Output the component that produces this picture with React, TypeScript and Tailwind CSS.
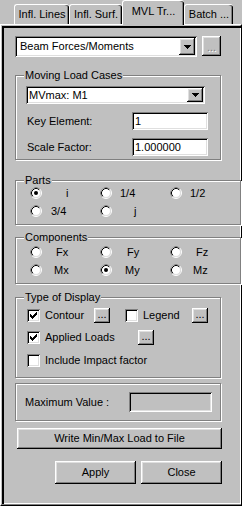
const raised =
  "bg-[#c0c0c0] shadow-[inset_-1px_-1px_0_#000,inset_1px_1px_0_#fff,inset_-2px_-2px_0_#808080,inset_2px_2px_0_#dfdfdf]";
const sunken =
  "shadow-[inset_1px_1px_0_#808080,inset_-1px_-1px_0_#fff,inset_2px_2px_0_#000,inset_-2px_-2px_0_#dfdfdf]";
const etched = "border border-[#808080] shadow-[inset_1px_1px_0_#fff,1px_1px_0_#fff]";

const tabs = [
  { label: "Infl. Lines", w: "w-[55px]" },
  { label: "Infl. Surf.", w: "w-[53px]" },
  { label: "MVL Tr...", w: "w-[62px]", active: true },
  { label: "Batch ...", w: "w-[49px]" },
];

const parts = [
  { label: "i", pad: "pl-[24px]", on: true },
  { label: "1/4", pad: "pl-[8px]" },
  { label: "1/2", pad: "pl-[8px]" },
  { label: "3/4", pad: "pl-[9px]" },
  { label: "j", pad: "pl-[22px]" },
];

const components = [
  { label: "Fx", pad: "pl-[14px]" },
  { label: "Fy", pad: "pl-[15px]" },
  { label: "Fz", pad: "pl-[14px]" },
  { label: "Mx", pad: "pl-[12px]" },
  { label: "My", pad: "pl-[13px]", on: true },
  { label: "Mz", pad: "pl-[11px]" },
];

const Radio = ({ on }: { on?: boolean }) => (
  <svg width="12" height="12" viewBox="0 0 12 12" className="shrink-0">
    <circle cx="6" cy="6" r="5.5" fill="none" stroke="#fff" />
    <path d="M2.11 9.89A5.5 5.5 0 0 1 9.89 2.11" fill="none" stroke="#808080" />
    <circle cx="6" cy="6" r="4.5" fill="#fff" stroke="#dfdfdf" />
    <path d="M2.82 9.18A4.5 4.5 0 0 1 9.18 2.82" fill="none" stroke="#000" />
    {on && <circle cx="6" cy="6" r="2" fill="#000" />}
  </svg>
);

const Check = ({ on }: { on?: boolean }) => (
  <div className={`w-[13px] h-[13px] shrink-0 bg-white flex items-center justify-center ${sunken}`}>
    {on && (
      <svg width="7" height="7" viewBox="0 0 7 7" shapeRendering="crispEdges">
        <path
          d="M0 2h1v3H0z M1 3h1v3H1z M2 4h1v3H2z M3 3h1v3H3z M4 2h1v3H4z M5 1h1v3H5z M6 0h1v3H6z"
          fill="#000"
        />
      </svg>
    )}
  </div>
);

const Arrow = () => (
  <div className={`w-[16px] h-full shrink-0 flex items-center justify-center ${raised}`}>
    <svg width="7" height="4" viewBox="0 0 7 4" shapeRendering="crispEdges">
      <path d="M0 0h7v1H0z M1 1h5v1H1z M2 2h3v1H2z M3 3h1v1H3z" fill="#000" />
    </svg>
  </div>
);

const Dots = ({ className = "", disabled }: { className?: string; disabled?: boolean }) => (
  <div className={`shrink-0 flex items-end justify-center pb-[2px] ${raised} ${className}`}>
    <span className={disabled ? "text-[#808080] [text-shadow:1px_1px_0_#fff]" : ""}>...</span>
  </div>
);

const Group = ({ title, className = "", children }: { title: string; className?: string; children: React.ReactNode }) => (
  <fieldset className={`w-[206px] ${etched} ${className}`}>
    <legend className="ml-[8px] px-px bg-[#c0c0c0] leading-[13px]">{title}</legend>
    {children}
  </fieldset>
);

export default function App() {
  return (
    <div className="w-[242px] h-[506px] bg-[#c0c0c0] flex flex-col text-[11px] leading-[13px] text-black select-none font-['Liberation_Sans',Arial,sans-serif]">
      {/* tabs */}
      <div className="relative z-10 flex items-end h-[24px] pl-[14px]">
        {tabs.map((t) =>
          t.active ? (
            <div
              key={t.label}
              className={`${t.w} h-[25px] -mb-px pt-[4px] text-center bg-[#c0c0c0] border-l border-t border-white rounded-t-[3px] shadow-[inset_-1px_0_0_#000,inset_-2px_0_0_#808080]`}
            >
              {t.label}
            </div>
          ) : (
            <div
              key={t.label}
              className={`${t.w} h-[20px] pt-[3px] text-center border-l border-t border-white rounded-t-[3px] shadow-[inset_-1px_0_0_#000,inset_-2px_0_0_#808080]`}
            >
              {t.label}
            </div>
          )
        )}
      </div>

      {/* tab page */}
      <div className="flex-1 flex p-px border-l border-t border-white border-r border-b border-r-black border-b-black shadow-[inset_-1px_-1px_0_#808080]">
        <div className="flex-1 flex flex-col pt-[10px] pl-[13px] shadow-[inset_2px_2px_0_#000,inset_-1px_-1px_0_#fff]">
          <div className="flex h-[21px]">
            <div className={`w-[182px] h-full flex items-center p-[2px] bg-white ${sunken}`}>
              <span className="flex-1 pl-[3px]">Beam Forces/Moments</span>
              <Arrow />
            </div>
            <Dots disabled className="ml-[5px] w-[19px] h-[20px]" />
          </div>

          <Group title="Moving Load Cases" className="mt-[12px]">
            <div className="flex flex-col pl-[10px] pt-[4px] pb-[3px]">
              <div className={`w-[179px] h-[18px] flex items-center p-[2px] bg-white ${sunken}`}>
                <span className="flex-1 pl-[1px]">MVmax: M1</span>
                <Arrow />
              </div>
              <div className="flex items-center h-[18px] mt-[8px]">
                <span className="w-[106px] pl-px">Key Element:</span>
                <div className={`w-[76px] h-full flex items-center pl-[3px] bg-white ${sunken}`}>1</div>
              </div>
              <div className="flex items-center h-[18px] mt-[8px]">
                <span className="w-[106px] pl-px">Scale Factor:</span>
                <div className={`w-[76px] h-full flex items-center pl-[3px] bg-white ${sunken}`}>1.000000</div>
              </div>
            </div>
          </Group>

          <Group title="Parts" className="mt-[14px]">
            <div className="grid grid-cols-[70px_70px_70px] gap-y-[6px] pl-[14px] pb-[7px]">
              {parts.map((p) => (
                <div key={p.label} className="flex items-center h-[12px]">
                  <Radio on={p.on} />
                  <span className={p.pad}>{p.label}</span>
                </div>
              ))}
            </div>
          </Group>

          <Group title="Components" className="mt-[6px]">
            <div className="grid grid-cols-[70px_70px_70px] gap-y-[6px] pl-[14px] pt-[2px] pb-[7px]">
              {components.map((c) => (
                <div key={c.label} className="flex items-center h-[12px]">
                  <Radio on={c.on} />
                  <span className={c.pad}>{c.label}</span>
                </div>
              ))}
            </div>
          </Group>

          <Group title="Type of Display" className="mt-[7px]">
            <div className="flex flex-col pl-[11px] pt-[3px] pb-[9px]">
              <div className="flex items-center h-[16px]">
                <Check on />
                <span className="w-[54px] pl-[5px]">Contour</span>
                <Dots className="w-[16px] h-[15px]" />
                <div className="ml-[15px]">
                  <Check />
                </div>
                <span className="w-[54px] pl-[5px]">Legend</span>
                <Dots className="w-[16px] h-[15px]" />
              </div>
              <div className="flex items-center h-[16px] mt-[6px]">
                <Check on />
                <span className="w-[98px] pl-[5px]">Applied Loads</span>
                <Dots className="w-[16px] h-[15px]" />
              </div>
              <div className="flex items-center h-[16px] mt-[7px]">
                <Check />
                <span className="pl-[5px]">Include Impact factor</span>
              </div>
            </div>
          </Group>

          <div className={`mt-[5px] w-[206px] flex items-center py-[8px] ${etched}`}>
            <span className="pl-[9px] flex-1">Maximum Value :</span>
            <div className={`w-[83px] h-[20px] mr-[8px] ${sunken}`} />
          </div>

          <div className={`mt-[7px] ml-[2px] w-[205px] h-[21px] flex items-center justify-center ${raised}`}>
            Write Min/Max Load to File
          </div>

          <div className="mt-[12px] w-[207px] flex justify-end gap-[5px]">
            <div className={`w-[81px] h-[23px] flex items-center justify-center ${raised}`}>Apply</div>
            <div className={`w-[81px] h-[23px] flex items-center justify-center ${raised}`}>Close</div>
          </div>
        </div>
      </div>
    </div>
  );
}
